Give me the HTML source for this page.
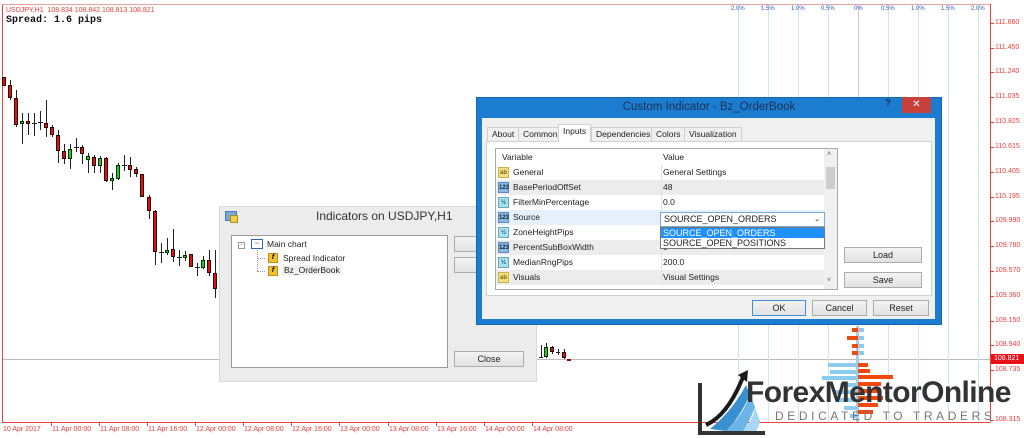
<!DOCTYPE html>
<html><head><meta charset="utf-8"><style>
*{margin:0;padding:0;box-sizing:border-box}
body{width:1024px;height:438px;overflow:hidden;background:#fff;position:relative;font-family:"Liberation Sans",sans-serif;font-size:8px}
.a{position:absolute}
.pl{position:absolute;left:995px;color:#e8403a;font-size:7px}
.pt{position:absolute;left:990px;width:4px;height:1px;background:#e8403a}
.tl{position:absolute;top:426px;color:#e8403a;font-size:7px}
.tk{position:absolute;top:422px;width:1px;height:4px;background:#e8403a}
.vl{position:absolute;top:4px;width:1px;height:418px;background:#cfe6ee}
.pc{position:absolute;top:6px;color:#2a5bbf;font-size:6px}
.w{position:absolute;width:1px;background:#222}
.r{position:absolute;width:4px;background:#d11;border:1px solid #300}
.g{position:absolute;width:4px;background:#2c2;border:1px solid #030}
.btn{position:absolute;background:linear-gradient(#f3f3f3,#e2e2e2);border:1px solid #acacac;font-size:9px;text-align:center;color:#222}
.row{position:absolute;left:0;width:328px;height:15px;font-size:8.5px;color:#222;line-height:15px}
.row .ic{position:absolute;left:2px;top:2px;width:11px;height:11px;font-size:6px;line-height:11px;text-align:center;font-weight:bold}
.row .n{position:absolute;left:17px}
.row .v{position:absolute;left:167px}
.row .sep{position:absolute;left:165px;top:0;width:1px;height:15px;background:#e4e4e4}
.ab{background:#f1e08a;color:#7a6a00;border:1px solid #c9b44a}
.i3{background:#8ab8e0;color:#123;border:1px solid #5a8ac0}
.ve{background:#a8e0ee;color:#267;border:1px solid #6ab}
.tab{position:absolute;top:127px;height:14px;border:1px solid #d0d0d0;border-bottom:none;background:#f0f0f0;font-size:8.5px;line-height:13px;padding:0 4px;color:#222}
</style></head><body>
<!-- chart frame -->
<div class="a" style="left:2px;top:4px;width:1px;height:418px;background:#e8403a"></div>
<div class="a" style="left:2px;top:4px;width:988px;height:1px;background:#e8a0a0"></div>
<div class="a" style="left:990px;top:4px;width:1px;height:418px;background:#e8403a"></div>
<div class="a" style="left:2px;top:422px;width:988px;height:1px;background:#e8403a"></div>
<div class="a" style="left:3px;top:359px;width:987px;height:1px;background:#bbb"></div>
<div class="a" style="left:6px;top:7px;color:#e8403a;font-size:7px">USDJPY,H1&nbsp; 108.834 108.842 108.813 108.821</div>
<div class="a" style="left:6px;top:15px;font-family:'Liberation Mono',monospace;font-size:10px;font-weight:bold;color:#111">Spread: 1.6 pips</div>

<!-- vertical percent lines -->
<div class="vl" style="left:738px"></div><div class="vl" style="left:768px"></div><div class="vl" style="left:798px"></div><div class="vl" style="left:828px"></div><div class="vl" style="left:858px;background:#c8c8c8"></div><div class="vl" style="left:888px"></div><div class="vl" style="left:918px"></div><div class="vl" style="left:948px"></div><div class="vl" style="left:978px"></div>
<div class="pc" style="left:731px">2.0%</div><div class="pc" style="left:761px">1.5%</div><div class="pc" style="left:791px">1.0%</div><div class="pc" style="left:821px">0.5%</div><div class="pc" style="left:854px">0%</div><div class="pc" style="left:881px">0.5%</div><div class="pc" style="left:911px">1.0%</div><div class="pc" style="left:941px">1.5%</div><div class="pc" style="left:971px">2.0%</div>

<!-- price axis -->
<div class="pl" style="top:19px">111.660</div><div class="pl" style="top:44px">111.450</div><div class="pl" style="top:68px">111.240</div><div class="pl" style="top:93px">111.035</div><div class="pl" style="top:118px">110.825</div><div class="pl" style="top:143px">110.615</div><div class="pl" style="top:168px">110.405</div><div class="pl" style="top:193px">110.195</div><div class="pl" style="top:217px">109.990</div><div class="pl" style="top:242px">109.780</div><div class="pl" style="top:267px">109.570</div><div class="pl" style="top:292px">109.360</div><div class="pl" style="top:317px">109.150</div><div class="pl" style="top:341px">108.940</div><div class="pl" style="top:366px">108.735</div><div class="pl" style="top:416px">108.315</div>
<div class="a" style="left:991px;top:354px;width:33px;height:10px;background:#e8101a;color:#fff;font-size:7px;line-height:10px;padding-left:3px">108.821</div>
<div class="pt" style="top:23px"></div><div class="pt" style="top:48px"></div><div class="pt" style="top:72px"></div><div class="pt" style="top:97px"></div><div class="pt" style="top:122px"></div><div class="pt" style="top:147px"></div><div class="pt" style="top:172px"></div><div class="pt" style="top:197px"></div><div class="pt" style="top:221px"></div><div class="pt" style="top:246px"></div><div class="pt" style="top:271px"></div><div class="pt" style="top:296px"></div><div class="pt" style="top:321px"></div><div class="pt" style="top:345px"></div><div class="pt" style="top:370px"></div><div class="pt" style="top:420px"></div>

<!-- time axis -->
<div class="tl" style="left:3px">10 Apr 2017</div><div class="tl" style="left:52px">11 Apr 00:00</div><div class="tl" style="left:100px">11 Apr 08:00</div><div class="tl" style="left:148px">11 Apr 16:00</div><div class="tl" style="left:196px">12 Apr 00:00</div><div class="tl" style="left:244px">12 Apr 08:00</div><div class="tl" style="left:292px">12 Apr 16:00</div><div class="tl" style="left:340px">13 Apr 00:00</div><div class="tl" style="left:389px">13 Apr 08:00</div><div class="tl" style="left:437px">13 Apr 16:00</div><div class="tl" style="left:485px">14 Apr 00:00</div><div class="tl" style="left:533px">14 Apr 08:00</div>
<div class="tk" style="left:51px"></div><div class="tk" style="left:99px"></div><div class="tk" style="left:147px"></div><div class="tk" style="left:195px"></div><div class="tk" style="left:243px"></div><div class="tk" style="left:291px"></div><div class="tk" style="left:339px"></div><div class="tk" style="left:388px"></div><div class="tk" style="left:436px"></div><div class="tk" style="left:484px"></div><div class="tk" style="left:532px"></div>

<!-- candles -->
<div class="r" style="left:2px;top:77px;height:9px"></div>
<div class="w" style="left:10px;top:80px;height:20px"></div><div class="r" style="left:8px;top:85px;height:13px"></div>
<div class="w" style="left:16px;top:90px;height:37px"></div><div class="r" style="left:14px;top:98px;height:27px"></div>
<div class="w" style="left:22px;top:113px;height:31px"></div><div class="g" style="left:20px;top:121px;height:3px"></div>
<div class="w" style="left:28px;top:113px;height:22px"></div><div class="r" style="left:26px;top:121px;height:3px"></div>
<div class="w" style="left:34px;top:113px;height:23px"></div><div class="a" style="left:32px;top:123px;width:5px;height:1px;background:#222"></div>
<div class="w" style="left:40px;top:111px;height:19px"></div><div class="a" style="left:38px;top:122px;width:5px;height:1px;background:#222"></div>
<div class="w" style="left:46px;top:100px;height:37px"></div><div class="r" style="left:44px;top:123px;height:5px"></div>
<div class="w" style="left:52px;top:125px;height:12px"></div><div class="r" style="left:50px;top:127px;height:8px"></div>
<div class="w" style="left:58px;top:130px;height:33px"></div><div class="r" style="left:56px;top:135px;height:16px"></div>
<div class="w" style="left:64px;top:144px;height:20px"></div><div class="r" style="left:62px;top:151px;height:8px"></div>
<div class="w" style="left:70px;top:144px;height:25px"></div><div class="g" style="left:68px;top:149px;height:10px"></div>
<div class="w" style="left:76px;top:138px;height:14px"></div><div class="a" style="left:74px;top:147px;width:5px;height:1px;background:#222"></div>
<div class="w" style="left:82px;top:145px;height:19px"></div><div class="r" style="left:80px;top:147px;height:7px"></div>
<div class="w" style="left:88px;top:153px;height:20px"></div><div class="g" style="left:86px;top:156px;height:4px"></div>
<div class="w" style="left:94px;top:155px;height:18px"></div><div class="r" style="left:92px;top:157px;height:9px"></div>
<div class="w" style="left:100px;top:156px;height:17px"></div><div class="g" style="left:98px;top:158px;height:8px"></div>
<div class="w" style="left:106px;top:157px;height:25px"></div><div class="r" style="left:104px;top:158px;height:23px"></div>
<div class="w" style="left:112px;top:173px;height:17px"></div><div class="g" style="left:110px;top:178px;height:3px"></div>
<div class="w" style="left:118px;top:163px;height:17px"></div><div class="g" style="left:116px;top:165px;height:14px"></div>
<div class="w" style="left:124px;top:155px;height:16px"></div><div class="a" style="left:122px;top:165px;width:5px;height:1px;background:#222"></div>
<div class="w" style="left:130px;top:157px;height:20px"></div><div class="r" style="left:128px;top:165px;height:5px"></div>
<div class="w" style="left:136px;top:167px;height:10px"></div><div class="r" style="left:134px;top:169px;height:5px"></div>
<div class="r" style="left:140px;top:174px;height:23px"></div>
<div class="w" style="left:149px;top:195px;height:24px"></div><div class="r" style="left:147px;top:197px;height:14px"></div>
<div class="w" style="left:155px;top:210px;height:55px"></div><div class="r" style="left:153px;top:211px;height:41px"></div>
<div class="w" style="left:161px;top:243px;height:20px"></div><div class="a" style="left:159px;top:252px;width:5px;height:1px;background:#222"></div>
<div class="w" style="left:167px;top:238px;height:17px"></div><div class="g" style="left:165px;top:250px;height:3px"></div>
<div class="w" style="left:173px;top:229px;height:33px"></div><div class="r" style="left:171px;top:249px;height:8px"></div>
<div class="w" style="left:179px;top:250px;height:16px"></div><div class="a" style="left:177px;top:257px;width:5px;height:1px;background:#222"></div>
<div class="w" style="left:185px;top:251px;height:10px"></div><div class="g" style="left:183px;top:255px;height:3px"></div>
<div class="r" style="left:189px;top:254px;height:13px"></div>
<div class="w" style="left:197px;top:263px;height:13px"></div><div class="a" style="left:195px;top:267px;width:5px;height:1px;background:#222"></div>
<div class="w" style="left:203px;top:256px;height:13px"></div><div class="g" style="left:201px;top:260px;height:8px"></div>
<div class="w" style="left:209px;top:250px;height:26px"></div><div class="r" style="left:207px;top:260px;height:13px"></div>
<div class="w" style="left:215px;top:250px;height:48px"></div><div class="r" style="left:213px;top:273px;height:16px"></div>
<!-- right candles -->
<div class="w" style="left:541px;top:345px;height:13px"></div><div class="a" style="left:539px;top:357px;width:4px;height:1px;background:#222"></div>
<div class="w" style="left:546px;top:343px;height:15px"></div><div class="g" style="left:544px;top:347px;height:10px"></div>
<div class="w" style="left:552px;top:346px;height:8px"></div><div class="r" style="left:550px;top:347px;height:5px"></div>
<div class="w" style="left:558px;top:349px;height:6px"></div><div class="a" style="left:556px;top:352px;width:4px;height:1px;background:#222"></div>
<div class="w" style="left:564px;top:349px;height:10px"></div><div class="r" style="left:562px;top:352px;height:6px"></div>
<div class="a" style="left:567px;top:359px;width:4px;height:2px;background:#a00"></div>

<!-- histogram -->
<div class="a" style="left:856px;top:326px;width:2px;height:96px;background:#9cd0f0"></div>
<div class="a" style="left:852px;top:328px;width:6px;height:4px;background:#f04a10"></div>
<div class="a" style="left:847px;top:336px;width:11px;height:4px;background:#f04a10"></div>
<div class="a" style="left:852px;top:344px;width:6px;height:4px;background:#f04a10"></div>
<div class="a" style="left:852px;top:351px;width:6px;height:4px;background:#f04a10"></div>
<div class="a" style="left:859px;top:328px;width:5px;height:4px;background:#8ccbf0"></div>
<div class="a" style="left:859px;top:336px;width:5px;height:4px;background:#8ccbf0"></div>
<div class="a" style="left:859px;top:344px;width:5px;height:4px;background:#8ccbf0"></div>
<div class="a" style="left:859px;top:351px;width:5px;height:4px;background:#8ccbf0"></div>
<div class="a" style="left:828px;top:363px;width:29px;height:4px;background:#8ccbf0"></div>
<div class="a" style="left:830px;top:370px;width:27px;height:4px;background:#8ccbf0"></div>
<div class="a" style="left:822px;top:376px;width:35px;height:4px;background:#8ccbf0"></div>
<div class="a" style="left:840px;top:383px;width:17px;height:4px;background:#8ccbf0"></div>
<div class="a" style="left:834px;top:390px;width:23px;height:4px;background:#8ccbf0"></div>
<div class="a" style="left:838px;top:398px;width:19px;height:4px;background:#8ccbf0"></div>
<div class="a" style="left:844px;top:406px;width:13px;height:4px;background:#8ccbf0"></div>
<div class="a" style="left:850px;top:414px;width:7px;height:4px;background:#8ccbf0"></div>
<div class="a" style="left:858px;top:363px;width:10px;height:4px;background:#f04a10"></div>
<div class="a" style="left:858px;top:369px;width:12px;height:4px;background:#f04a10"></div>
<div class="a" style="left:858px;top:375px;width:35px;height:4px;background:#f04a10"></div>
<div class="a" style="left:858px;top:382px;width:23px;height:4px;background:#f04a10"></div>
<div class="a" style="left:858px;top:389px;width:23px;height:4px;background:#f04a10"></div>
<div class="a" style="left:858px;top:396px;width:25px;height:4px;background:#f04a10"></div>
<div class="a" style="left:858px;top:403px;width:20px;height:4px;background:#f04a10"></div>
<div class="a" style="left:858px;top:410px;width:15px;height:4px;background:#f04a10"></div>

<!-- logo -->
<svg class="a" style="left:698px;top:365px" width="80" height="70" viewBox="0 0 80 70">
<path d="M2 18 V68 H67" stroke="#333" stroke-width="4" fill="none"/>
<path d="M8 60 Q30 50 45 12" stroke="#1a1a1a" stroke-width="4" fill="none"/>
<path d="M40 10 L50 5 L49 17 Z" fill="#1a1a1a"/>
<path d="M12 64 Q35 45 48 20 L52 30 Q40 55 28 66 Z" fill="#3a8fd0"/>
<path d="M28 66 Q45 50 52 30 L57 42 Q50 60 45 66 Z" fill="#6ab4e8"/>
<path d="M45 66 Q55 55 57 42 L62 56 Q60 64 58 66 Z" fill="#a8d6f4"/>
</svg>
<div class="a" style="left:746px;top:377px;font-size:30px;font-weight:bold;color:#333;letter-spacing:-0.6px;line-height:32px;white-space:nowrap">ForexMentorOnline</div>
<div class="a" style="left:775px;top:409px;font-size:12px;color:#777;letter-spacing:3.6px;line-height:14px;white-space:nowrap">DEDICATED TO TRADERS</div>

<!-- Indicators dialog -->
<div class="a" style="left:219px;top:206px;width:318px;height:176px;background:#ececec;border:1px solid #d8d8d8"></div>
<div class="a" style="left:225px;top:211px;width:12px;height:10px;background:#7aa8d8;border:1px solid #4a7ab0"></div>
<div class="a" style="left:230px;top:215px;width:8px;height:8px;background:#f0d040;border:1px solid #b09020"></div>
<div class="a" style="left:316px;top:209px;font-size:12px;color:#333">Indicators on USDJPY,H1</div>
<div class="a" style="left:231px;top:235px;width:217px;height:133px;background:#fff;border:1px solid #999"></div>
<div class="a" style="left:238px;top:242px;width:7px;height:7px;border:1px solid #999;font-size:6px;line-height:5px;text-align:center;color:#555">-</div>
<div class="a" style="left:251px;top:239px;width:12px;height:10px;border:1px solid #3060c0;background:#fff;color:#3060c0;font-size:8px;line-height:8px;text-align:center">~</div>
<div class="a" style="left:267px;top:239px;font-size:8.5px;color:#222">Main chart</div>
<div class="a" style="left:257px;top:250px;width:1px;height:21px;border-left:1px dotted #999"></div>
<div class="a" style="left:257px;top:258px;width:8px;border-top:1px dotted #999"></div>
<div class="a" style="left:257px;top:271px;width:8px;border-top:1px dotted #999"></div>
<div class="a" style="left:268px;top:253px;width:10px;height:10px;background:#f0c030;border:1px solid #c09010;font-size:7px;line-height:8px;text-align:center;font-style:italic;font-weight:bold">f</div>
<div class="a" style="left:268px;top:266px;width:10px;height:10px;background:#f0c030;border:1px solid #c09010;font-size:7px;line-height:8px;text-align:center;font-style:italic;font-weight:bold">f</div>
<div class="a" style="left:283px;top:253px;font-size:8.5px;color:#222">Spread Indicator</div>
<div class="a" style="left:282px;top:265px;font-size:8.5px;color:#222;background:#f0f0f0;padding:0 2px">Bz_OrderBook</div>
<div class="btn" style="left:454px;top:236px;width:71px;height:16px"></div>
<div class="btn" style="left:454px;top:257px;width:71px;height:16px"></div>
<div class="btn" style="left:454px;top:351px;width:70px;height:16px;line-height:14px">Close</div>

<!-- Custom Indicator dialog -->
<div class="a" style="left:476px;top:97px;width:466px;height:228px;background:#1c7dd0;border:1px solid #1468b0"></div>
<div class="a" style="left:476px;top:101px;width:466px;text-align:center;font-size:11.5px;color:#1c3050">Custom Indicator - Bz_OrderBook</div>
<div class="a" style="left:885px;top:98px;font-size:10px;font-weight:bold;color:#1c3050">?</div>
<div class="a" style="left:902px;top:97px;width:29px;height:16px;background:#c7403a;color:#fff;font-size:10px;text-align:center;line-height:15px">✕</div>
<div class="a" style="left:482px;top:118px;width:453px;height:201px;background:#f0f0f0"></div>
<div class="a" style="left:486px;top:141px;width:446px;height:155px;background:#fff;border:1px solid #d0d0d0"></div>
<div class="tab" style="left:487px">About</div>
<div class="tab" style="left:518px">Common</div>
<div class="tab" style="left:558px;top:124px;height:18px;background:#fff;z-index:2">Inputs</div>
<div class="tab" style="left:591px">Dependencies</div>
<div class="tab" style="left:651px">Colors</div>
<div class="tab" style="left:684px">Visualization</div>
<!-- grid -->
<div class="a" style="left:495px;top:148px;width:343px;height:142px;background:#fff;border:1px solid #aaa;overflow:hidden">
 <div class="row" style="top:1px"><span class="n" style="left:6px">Variable</span><span class="v">Value</span></div>
 <div class="row" style="top:16px"><span class="ic ab">ab</span><span class="n">General</span><span class="sep"></span><span class="v">General Settings</span></div>
 <div class="row" style="top:31px;background:#ececec"><span class="ic i3">123</span><span class="n">BasePeriodOffSet</span><span class="sep"></span><span class="v">48</span></div>
 <div class="row" style="top:46px"><span class="ic ve">½</span><span class="n">FilterMinPercentage</span><span class="sep"></span><span class="v">0.0</span></div>
 <div class="row" style="top:61px;background:#e6f0fa"><span class="ic i3">123</span><span class="n">Source</span><span class="sep"></span></div>
 <div class="row" style="top:76px"><span class="ic ve">½</span><span class="n">ZoneHeightPips</span><span class="sep"></span></div>
 <div class="row" style="top:91px;background:#ececec"><span class="ic i3">123</span><span class="n">PercentSubBoxWidth</span><span class="sep"></span><span class="v">5</span></div>
 <div class="row" style="top:106px"><span class="ic ve">½</span><span class="n">MedianRngPips</span><span class="sep"></span><span class="v">200.0</span></div>
 <div class="row" style="top:121px;background:#ececec"><span class="ic ab">ab</span><span class="n">Visuals</span><span class="sep"></span><span class="v">Visual Settings</span></div>
 <div class="a" style="left:328px;top:0;width:14px;height:142px;background:#f0f0f0"></div>
 <div class="a" style="left:330px;top:18px;width:9px;height:22px;background:#cdcdcd"></div>
 <div class="a" style="left:331px;top:2px;font-size:7px;color:#555">˄</div>
 <div class="a" style="left:331px;top:128px;font-size:7px;color:#555">˅</div>
</div>
<div class="a" style="left:660px;top:212px;width:165px;height:15px;background:#fff;border:1px solid #7aa8d8;font-size:9px;line-height:13px;padding-left:3px;color:#222">SOURCE_OPEN_ORDERS<span style="position:absolute;right:4px;font-size:7px">⌄</span></div>
<div class="a" style="left:660px;top:227px;width:165px;height:22px;background:#fff;border:1px solid #777;font-size:9px;line-height:10px;color:#222">
<div style="background:#1e90ff;color:#fff;padding-left:2px">SOURCE_OPEN_ORDERS</div><div style="padding-left:2px">SOURCE_OPEN_POSITIONS</div></div>
<div class="btn" style="left:844px;top:247px;width:78px;height:16px;line-height:14px">Load</div>
<div class="btn" style="left:844px;top:272px;width:78px;height:16px;line-height:14px">Save</div>
<div class="btn" style="left:752px;top:300px;width:54px;height:16px;line-height:14px;border-color:#3c8fd8">OK</div>
<div class="btn" style="left:812px;top:300px;width:55px;height:16px;line-height:14px">Cancel</div>
<div class="btn" style="left:873px;top:300px;width:56px;height:16px;line-height:14px">Reset</div>
</body></html>
